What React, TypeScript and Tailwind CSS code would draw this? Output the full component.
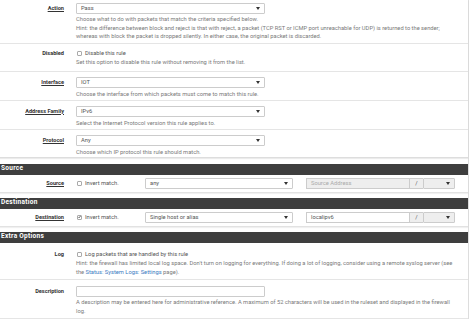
import React from 'react';

const font = { fontFamily: 'Roboto, "Liberation Sans", sans-serif' };
const help = 'text-[5.75px] leading-[8.5px] text-[#7a7a7a] whitespace-nowrap';

function Caret() {
  return (
    <svg width="4" height="3" viewBox="0 0 4 3" className="shrink-0">
      <path d="M0 0h4L2 3z" fill="#333" />
    </svg>
  );
}

function Select({ value, className = '', grey = false }: { value?: string; className?: string; grey?: boolean }) {
  return (
    <div
      className={`h-[11px] flex items-center justify-between border border-[#ccc] rounded-[1px] pl-[4px] pr-[4px] text-[5.75px] text-[#555] ${grey ? 'bg-[#eee]' : 'bg-white'} ${className}`}
    >
      <span>{value}</span>
      <Caret />
    </div>
  );
}

function Check({ checked = false, label }: { checked?: boolean; label: string }) {
  return (
    <div className="flex items-center h-[9px] text-[5.75px] text-[#555]">
      <span className="ml-[1px] w-[5px] h-[5px] border border-[#aaa] rounded-[1px] bg-white flex items-center justify-center">
        {checked && (
          <svg width="4" height="4" viewBox="0 0 4 4">
            <path d="M0.5 2l1 1 2-2.5" stroke="#222" strokeWidth="0.9" fill="none" />
          </svg>
        )}
      </span>
      <span className="ml-[3px]">{label}</span>
    </div>
  );
}

function Label({ children, req = false, h = 'leading-[11px]' }: { children: React.ReactNode; req?: boolean; h?: string }) {
  return (
    <div className={`w-[64px] shrink-0 text-right text-[5.6px] font-bold text-[#333] ${h}`}>
      <span className={req ? 'underline underline-offset-1' : ''}>{children}</span>
    </div>
  );
}

function Heading({ title, top = 'mt-[5px]' }: { title: string; top?: string }) {
  return (
    <div className={`${top} h-[11px] bg-[#3e3e3e] flex items-center pl-[1px] text-[6.5px] font-bold tracking-[0.3px] text-white`}>
      {title}
    </div>
  );
}

function AddrRow({ label, checked, type, addr, placeholder }: { label: string; checked: boolean; type: string; addr: string; placeholder: boolean }) {
  return (
    <div className="flex items-center pt-[3px] pb-[3px] border-b border-[#e2e2e2] shadow-[0_1px_1px_rgba(0,0,0,0.06)]">
      <Label req>{label}</Label>
      <div className="pl-[12px] w-[81px] shrink-0">
        <Check checked={checked} label="Invert match." />
      </div>
      <Select value={type} className="w-[148px]" />
      <div className="ml-[13px] flex h-[11px] text-[5.75px]">
        <div
          className={`w-[104px] border border-[#ccc] flex items-center pl-[4px] ${placeholder ? 'bg-[#eee] text-[#aaa]' : 'bg-white text-[#555]'}`}
        >
          {addr}
        </div>
        <div className="w-[13px] border-y border-[#ccc] bg-[#eee] flex items-center justify-center text-[#555]">/</div>
        <Select className="w-[32px]" grey />
      </div>
    </div>
  );
}

export default function App() {
  return (
    <div className="w-[474px] h-[321px] bg-white overflow-hidden" style={font}>
      <div className="w-[469px] border-r border-[#ddd]">
        <div className="border-b border-[#ddd] shadow-[0_1px_1px_rgba(0,0,0,0.08)]">
          <div className="flex border-b border-[#e5e5e5] pt-[3px] pb-[2px]">
            <Label req>Action</Label>
            <div className="pl-[12px]">
              <Select value="Pass" className="w-[189px]" />
              <p className={`${help} mt-[1px]`}>
                Choose what to do with packets that match the criteria specified below.
                <br />
                Hint: the difference between block and reject is that with reject, a packet (TCP RST or ICMP port unreachable for UDP) is returned to the sender;
                <br />
                whereas with block the packet is dropped silently. In either case, the original packet is discarded.
              </p>
            </div>
          </div>

          <div className="flex border-b border-[#e5e5e5] pt-[5px] pb-[4px]">
            <Label h="leading-[9px]">Disabled</Label>
            <div className="pl-[12px]">
              <Check label="Disable this rule" />
              <p className={`${help} leading-[9px]`}>Set this option to disable this rule without removing it from the list.</p>
            </div>
          </div>

          <div className="flex border-b border-[#e5e5e5] pt-[5px] pb-[1px]">
            <Label req>Interface</Label>
            <div className="pl-[12px]">
              <Select value="IOT" className="w-[189px]" />
              <p className={`${help} leading-[9px] mt-[2px]`}>Choose the interface from which packets must come to match this rule.</p>
            </div>
          </div>

          <div className="flex border-b border-[#e5e5e5] pt-[5px] pb-[1px]">
            <Label req>Address Family</Label>
            <div className="pl-[12px]">
              <Select value="IPv6" className="w-[189px]" />
              <p className={`${help} leading-[9px] mt-[2px]`}>Select the Internet Protocol version this rule applies to.</p>
            </div>
          </div>

          <div className="flex pt-[5px]">
            <Label req>Protocol</Label>
            <div className="pl-[12px]">
              <Select value="Any" className="w-[189px]" />
              <p className={`${help} leading-[9px] mt-[2px]`}>Choose which IP protocol this rule should match.</p>
            </div>
          </div>
        </div>

        <Heading title="Source" top="mt-[6px]" />
        <AddrRow label="Source" checked={false} type="any" addr="Source Address" placeholder />

        <Heading title="Destination" />
        <AddrRow label="Destination" checked type="Single host or alias" addr="localipv6" placeholder={false} />

        <Heading title="Extra Options" />
        <div className="flex border-b border-[#e5e5e5] pt-[7px] pb-[3px]">
          <Label h="leading-[9px]">Log</Label>
          <div className="pl-[12px]">
            <Check label="Log packets that are handled by this rule" />
            <p className={`${help} mt-[0.5px]`}>
              Hint: the firewall has limited local log space. Don&apos;t turn on logging for everything. If doing a lot of logging, consider using a remote syslog server (see
              <br />
              the <span className="text-[#3b7bbf]">Status: System Logs: Settings</span> page).
            </p>
          </div>
        </div>

        <div className="flex border-b border-[#e5e5e5] pt-[6px] pb-[2px]">
          <Label>Description</Label>
          <div className="pl-[12px]">
            <div className="w-[189px] h-[11px] border border-[#ccc] rounded-[1px] bg-white" />
            <p className={`${help} leading-[9px] mt-[0.5px]`}>
              A description may be entered here for administrative reference. A maximum of 52 characters will be used in the ruleset and displayed in the firewall
              <br />
              log.
            </p>
          </div>
        </div>
      </div>
    </div>
  );
}
